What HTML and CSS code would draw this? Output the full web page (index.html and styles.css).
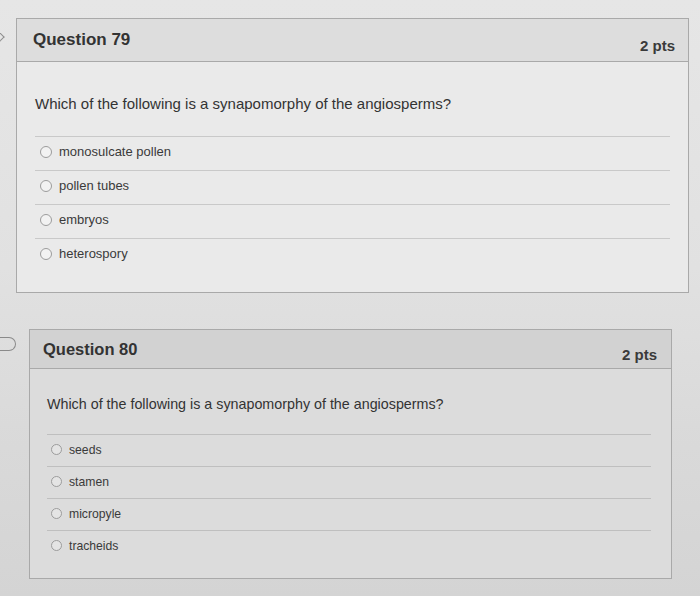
FILE: index.html
```html
<!DOCTYPE html>
<html>
<head>
<meta charset="utf-8">
<link rel="stylesheet" href="styles.css">
</head>
<body>
<div class="page">
  <section class="question q1">
    <span class="marker chevron"></span>
    <header class="q-header">
      <h2 class="q-title">Question 79</h2>
      <span class="pts">2 pts</span>
    </header>
    <div class="q-body">
      <p class="q-text">Which of the following is a synapomorphy of the angiosperms?</p>
      <ul class="answers">
        <li class="answer"><span class="radio"></span>monosulcate pollen</li>
        <li class="answer"><span class="radio"></span>pollen tubes</li>
        <li class="answer"><span class="radio"></span>embryos</li>
        <li class="answer"><span class="radio"></span>heterospory</li>
      </ul>
    </div>
  </section>

  <section class="question q2">
    <span class="marker tag"></span>
    <header class="q-header">
      <h2 class="q-title">Question 80</h2>
      <span class="pts">2 pts</span>
    </header>
    <div class="q-body">
      <p class="q-text">Which of the following is a synapomorphy of the angiosperms?</p>
      <ul class="answers">
        <li class="answer"><span class="radio"></span>seeds</li>
        <li class="answer"><span class="radio"></span>stamen</li>
        <li class="answer"><span class="radio"></span>micropyle</li>
        <li class="answer"><span class="radio"></span>tracheids</li>
      </ul>
    </div>
  </section>
</div>
</body>
</html>
```

FILE: styles.css
```css
html, body {
  margin: 0;
  padding: 0;
}
body {
  width: 700px;
  height: 596px;
  overflow: hidden;
  font-family: "Liberation Sans", Arial, sans-serif;
  color: #333;
  background: linear-gradient(180deg, #e6e6e6 0%, #e1e1e1 45%, #d9d9d9 75%, #d4d4d4 100%);
}
.page {
  padding-top: 18px;
  display: flex;
  flex-direction: column;
}
.question {
  position: relative;
  border: 1px solid #a9a9a9;
  box-sizing: border-box;
}
.q1 {
  margin-left: 16px;
  width: 673px;
  background: #eaeaea;
}
.q2 {
  margin-top: 36px;
  margin-left: 29px;
  width: 643px;
  background: #dcdcdc;
}
.q-header {
  display: flex;
  justify-content: space-between;
  align-items: center;
  box-sizing: border-box;
  border-bottom: 1px solid #a9a9a9;
}
.q1 .q-header {
  height: 43px;
  padding: 0 13px 0 16px;
  background: #dddddd;
}
.q2 .q-header {
  height: 39px;
  padding: 0 14px 0 13px;
  background: #d2d2d2;
}
.q-title {
  margin: 0;
  font-weight: bold;
  color: #333;
}
.q1 .q-title { font-size: 17px; }
.q2 .q-title { font-size: 16.5px; }
.pts {
  font-weight: bold;
  font-size: 15px;
  color: #3a3a3a;
  position: relative;
}
.q1 .pts { top: 5px; }
.q2 .pts { top: 5px; }

.q1 .q-body { padding: 33px 18px 20px 18px; }
.q2 .q-body { padding: 27px 20px 16px 17px; }

.q-text {
  margin: 0;
  color: #333;
}
.q1 .q-text { font-size: 15px; line-height: 18px; margin-bottom: 23px; }
.q2 .q-text { font-size: 14.3px; line-height: 17px; margin-bottom: 21px; }

.answers {
  list-style: none;
  margin: 0;
  padding: 0;
}
.answer {
  display: flex;
  align-items: center;
  box-sizing: border-box;
  border-top: 1px solid #c9c9c9;
  color: #3a3a3a;
}
.q1 .answer {
  height: 34px;
  padding: 0 0 4px 5px;
  font-size: 13px;
}
.q2 .answer {
  height: 32px;
  padding: 0 0 2px 4px;
  font-size: 12.2px;
  border-top-color: #bfbfbf;
}
.radio {
  flex: none;
  border: 1px solid #9c9c9c;
  border-radius: 50%;
  box-sizing: border-box;
  background: #f2f2f2;
}
.q1 .radio { width: 12px; height: 12px; margin-right: 7px; }
.q2 .radio { width: 11px; height: 11px; margin-right: 7px; background: #e4e4e4; }

.marker {
  position: absolute;
  box-sizing: border-box;
}
.chevron {
  left: -22px;
  top: 14px;
  width: 8px;
  height: 8px;
  border-top: 1.5px solid #8e8e8e;
  border-right: 1.5px solid #8e8e8e;
  transform: rotate(45deg);
}
.tag {
  left: -34px;
  top: 7px;
  width: 20px;
  height: 14px;
  border: 1.5px solid #8a8a8a;
  border-left: none;
  border-radius: 0 8px 8px 0;
}
```
